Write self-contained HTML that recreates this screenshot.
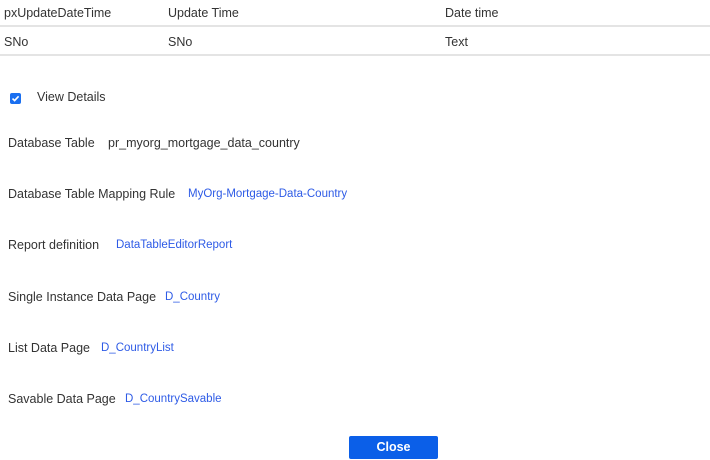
<!DOCTYPE html>
<html><head><style>
body{margin:0;width:710px;height:460px;background:#fff;font-family:"Liberation Sans",sans-serif;color:#333;position:relative;overflow:hidden}
.a{position:absolute;white-space:nowrap;font-size:12.5px;line-height:16px}
.l{color:#2e5be6;font-size:11.5px}
.hr{position:absolute;left:0;width:710px;height:2px;background:#e4e4e4}
</style></head><body>
<div class="a" style="left:4px;top:5px">pxUpdateDateTime</div>
<div class="a" style="left:168px;top:5px">Update Time</div>
<div class="a" style="left:445px;top:5px">Date time</div>
<div class="hr" style="top:25px"></div>
<div class="a" style="left:4px;top:34px">SNo</div>
<div class="a" style="left:168px;top:34px">SNo</div>
<div class="a" style="left:445px;top:34px">Text</div>
<div class="hr" style="top:54px"></div>
<div style="position:absolute;left:10px;top:93px;width:11px;height:11px;border-radius:2px;background:#1a6ff0"><svg width="11" height="11" viewBox="0 0 11 11" style="display:block"><path d="M2.5 5.6 L4.6 7.6 L8.6 3.3" stroke="#fff" stroke-width="1.6" fill="none"/></svg></div>
<div class="a" style="left:37px;top:89px">View Details</div>
<div class="a" style="left:8px;top:135px">Database Table</div>
<div class="a" style="left:108px;top:135px">pr_myorg_mortgage_data_country</div>
<div class="a" style="left:8px;top:186px">Database Table Mapping Rule</div>
<div class="a l" style="left:188px;top:186px">MyOrg-Mortgage-Data-Country</div>
<div class="a" style="left:8px;top:237px">Report definition</div>
<div class="a l" style="left:116px;top:237px">DataTableEditorReport</div>
<div class="a" style="left:8px;top:289px">Single Instance Data Page</div>
<div class="a l" style="left:165px;top:289px">D_Country</div>
<div class="a" style="left:8px;top:340px">List Data Page</div>
<div class="a l" style="left:101px;top:340px">D_CountryList</div>
<div class="a" style="left:8px;top:391px">Savable Data Page</div>
<div class="a l" style="left:125px;top:391px">D_CountrySavable</div>
<div style="position:absolute;left:349px;top:436px;width:89px;height:23px;background:#0b5fe8;border-radius:2px;color:#fff;font-weight:bold;font-size:12.5px;line-height:23px;text-align:center">Close</div>
</body></html>
